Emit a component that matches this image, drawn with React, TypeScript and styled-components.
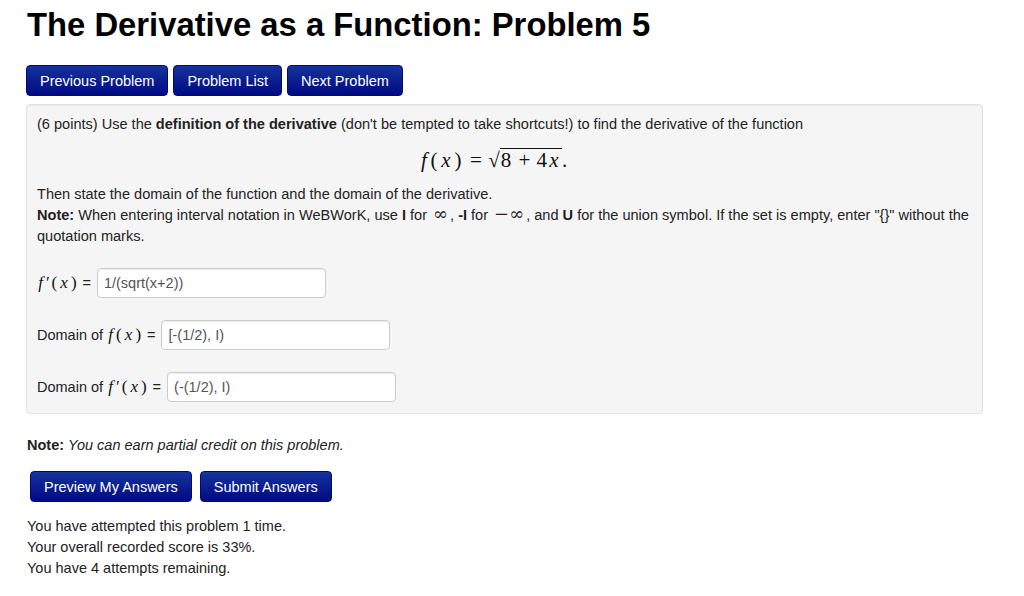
import React from 'react';
import styled, { createGlobalStyle } from 'styled-components';

const GlobalStyle = createGlobalStyle`
  html, body {
    margin: 0;
    padding: 0;
    background: #fff;
  }
  body {
    font-family: 'Liberation Sans', Arial, sans-serif;
    font-size: 14.5px;
    line-height: 21px;
    color: #222;
  }
`;

const Page = styled.div`
  padding: 0 41px 0 26px;
`;

const Title = styled.h1`
  margin: 7px 0 0 1px;
  font-size: 32.8px;
  line-height: 36px;
  font-weight: 700;
  color: #000;
`;

const NavBar = styled.div`
  display: flex;
  gap: 5px;
  margin-top: 22px;
`;

const Button = styled.button`
  height: 31px;
  padding: 0 13px;
  font-family: 'Liberation Sans', Arial, sans-serif;
  font-size: 14.5px;
  color: #fff;
  background: linear-gradient(to bottom, #16339e, #000a82);
  border: 1px solid #00096e;
  border-radius: 4px;
  cursor: pointer;
`;

const Well = styled.div`
  margin-top: 8px;
  padding: 9px 10px 11px;
  background: #f5f5f5;
  border: 1px solid #e3e3e3;
  border-radius: 4px;
  box-shadow: inset 0 1px 1px rgba(0, 0, 0, 0.05);
`;

const Para = styled.div`
  font-size: 14.55px;
`;

/* TeX-like math: serif, roomy letter spacing */
const Math = styled.span<{ $size: number }>`
  font-family: 'Liberation Serif', 'Times New Roman', serif;
  font-size: ${(p) => p.$size}px;
  letter-spacing: 0.11em;
  color: #111;
  white-space: nowrap;
`;

const Var = styled.i`
  margin: 0 0.07em;
`;

const Display = styled.div`
  display: flex;
  justify-content: center;
  align-items: center;
  height: 24px;
  margin: 12px 0 13px;
  padding-right: 20px;
`;

const Op = styled.span`
  margin: 0 0.3em;
  letter-spacing: 0;
`;

const Radical = styled.span`
  display: inline-flex;
  align-items: flex-end;
`;

const RadSign = styled.span`
  line-height: 1;
  letter-spacing: 0;
`;

const Radicand = styled.span`
  border-top: 1px solid #111;
  line-height: 22px;
  padding: 0 1px;
  letter-spacing: 0.04em;
`;

const Infinity = styled.span`
  font-family: 'DejaVu Serif', 'Liberation Serif', serif;
  font-size: 18px;
  line-height: 0;
  margin: 0 2px;
`;

const Answers = styled.div`
  display: flex;
  flex-direction: column;
  gap: 22px;
  margin-top: 21px;
`;

const AnswerRow = styled.div`
  display: flex;
  align-items: center;
  gap: 6px;
`;

const Label = styled.span`
  white-space: nowrap;
`;

const Answer = styled.input`
  box-sizing: border-box;
  width: 229px;
  height: 30px;
  padding: 0 6px;
  font-family: 'Liberation Sans', Arial, sans-serif;
  font-size: 14.5px;
  color: #555;
  background: #fff;
  border: 1px solid #ccc;
  border-radius: 4px;
  box-shadow: inset 0 1px 1px rgba(0, 0, 0, 0.075);
`;

const Note = styled.div`
  margin-top: 21px;
  padding-left: 1px;
`;

const Actions = styled.div`
  display: flex;
  gap: 8px;
  margin: 15px 0 0 4px;
`;

const Status = styled.div`
  margin-top: 14px;
  padding-left: 1px;
`;

const Fn = ({ prime = false }: { prime?: boolean }) => (
  <Math $size={17}>
    <Var>f</Var>
    {prime ? '′' : ''}(<Var>x</Var>)
  </Math>
);

export default function App() {
  return (
    <Page>
      <GlobalStyle />
      <Title>The Derivative as a Function: Problem 5</Title>
      <NavBar>
        <Button>Previous Problem</Button>
        <Button>Problem List</Button>
        <Button>Next Problem</Button>
      </NavBar>
      <Well>
        <Para>
          (6 points) Use the <b>definition of the derivative</b> (don't be tempted to take
          shortcuts!) to find the derivative of the function
        </Para>
        <Display>
          <Math $size={21}>
            <Var>f</Var>(<Var>x</Var>)<Op>=</Op>
            <Radical>
              <RadSign>√</RadSign>
              <Radicand>
                8<Op>+</Op>4<Var>x</Var>
              </Radicand>
            </Radical>
            .
          </Math>
        </Display>
        <Para>Then state the domain of the function and the domain of the derivative.</Para>
        <Para>
          <b>Note:</b> When entering interval notation in WeBWorK, use <b>I</b> for{' '}
          <Infinity>∞</Infinity>, <b>-I</b> for <Infinity>−∞</Infinity>, and <b>U</b> for the
          union symbol. If the set is empty, enter "{'{}'}" without the quotation marks.
        </Para>
        <Answers>
          <AnswerRow>
            <Label>
              <Fn prime /> =
            </Label>
            <Answer defaultValue="1/(sqrt(x+2))" />
          </AnswerRow>
          <AnswerRow>
            <Label>
              Domain of <Fn /> =
            </Label>
            <Answer defaultValue="[-(1/2), I)" />
          </AnswerRow>
          <AnswerRow>
            <Label>
              Domain of <Fn prime /> =
            </Label>
            <Answer defaultValue="(-(1/2), I)" />
          </AnswerRow>
        </Answers>
      </Well>
      <Note>
        <b>Note:</b> <i>You can earn partial credit on this problem.</i>
      </Note>
      <Actions>
        <Button>Preview My Answers</Button>
        <Button>Submit Answers</Button>
      </Actions>
      <Status>
        You have attempted this problem 1 time.
        <br />
        Your overall recorded score is 33%.
        <br />
        You have 4 attempts remaining.
      </Status>
    </Page>
  );
}
